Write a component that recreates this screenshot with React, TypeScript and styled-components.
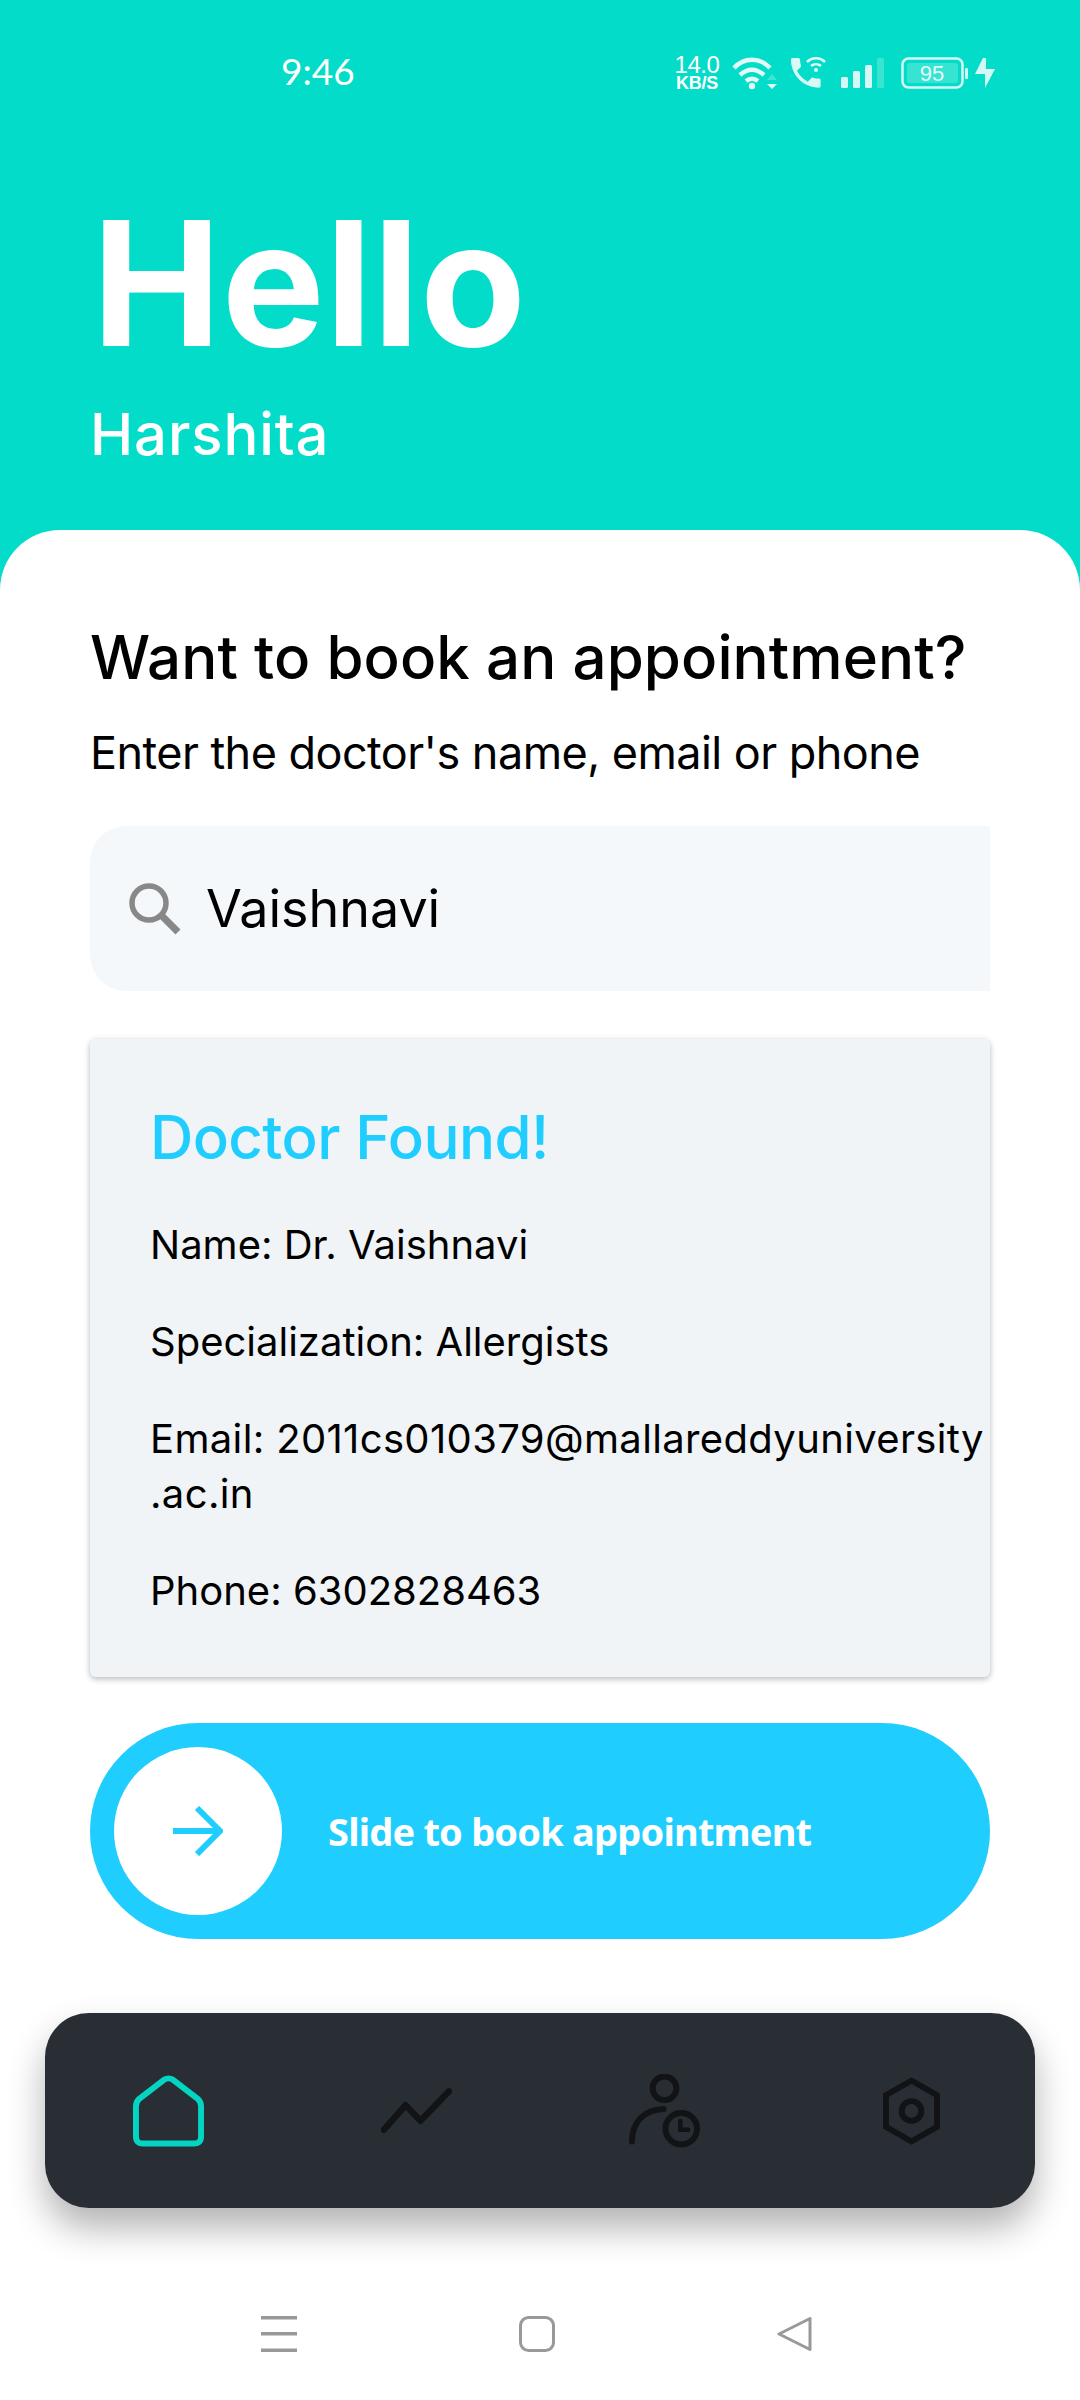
import React from "react";
import styled, { createGlobalStyle } from "styled-components";

const Global = createGlobalStyle`
  html, body { margin: 0; padding: 0; background: #fff; }
  * { box-sizing: border-box; }
`;
const Page = styled.div`
  width: 1080px; height: 2400px; background: #03dcc8; overflow: hidden;
  font-family: Inter, "Noto Sans", sans-serif; color: #000;
  display: flex; flex-direction: column;
`;
const Header = styled.header`
  height: 530px; flex: none; padding: 0; color: #fff; display: flex; flex-direction: column;
`;
const StatusBar = styled.div`
  height: 66px; margin-top: 40px; display: flex; align-items: center; padding-left: 281px; padding-right: 86px;
`;
const Time = styled.div`
  font-size: 37px; font-weight: 400; width: 393px; flex: none; font-family: Lato, sans-serif; line-height: 62px; margin-bottom: 4px;
`;
const Speed = styled.div`
  display: flex; flex-direction: column; align-items: center; width: 46px; line-height: 1; flex: none;
  font-family: "Liberation Sans", sans-serif; margin-right: 11px;
  b { font-size: 24px; font-weight: 400; line-height: 20px; letter-spacing: -.4px; }
  span { font-size: 18px; line-height: 16px; font-weight: 700; letter-spacing: -.2px; }
`;
const StatusIcons = styled.div`
  display: flex; align-items: center; flex: none;
`;
const Gap = styled.span<{ $w: number }>`
  display: inline-block; flex: none; width: ${(p) => p.$w}px;
`;
const Greeting = styled.h1`
  margin: 97px 0 0; padding-left: 92px; font-size: 173px; font-weight: 700; line-height: 160px; letter-spacing: .5px;
`;
const Name = styled.div`
  padding-left: 90px; font-size: 58px; line-height: 70px; font-weight: 500; margin-top: 36px; letter-spacing: .9px;
`;
const Sheet = styled.main`
  flex: 1; background: #fff; border-radius: 60px 60px 0 0; display: flex; flex-direction: column; padding: 0 90px;
`;
const Title = styled.h2`
  margin: 89px 0 0; font-size: 60px; line-height: 76px; font-weight: 500; letter-spacing: .1px; white-space: nowrap;
`;
const Subtitle = styled.p`
  margin: 28px 0 0; font-size: 45px; line-height: 60px; font-weight: 400; letter-spacing: -0.55px; white-space: nowrap;
`;
const Search = styled.div`
  margin-top: 43px; height: 165px; background: #f4f8fb; border-radius: 36px 0 0 36px;
  display: flex; align-items: center; padding-left: 38px; font-size: 52px; gap: 24px;
`;
const Card = styled.section`
  margin-top: 48px; height: 638px; background: #f0f4f7; border-radius: 6px; padding: 62px 0 0 60px;
  box-shadow: 0 2px 6px rgba(0,0,0,.28); overflow: hidden;
`;
const CardTitle = styled.h3`
  margin: 0 0 44px; font-size: 60px; line-height: 72px; font-weight: 500; color: #1fcdff; letter-spacing: -.6px;
`;
const Line = styled.p<{ $ls?: number }>`
  margin: 0 0 42px; font-size: 40px; line-height: 55px; white-space: nowrap; letter-spacing: ${(p) => p.$ls ?? 0}px;
`;
const Slider = styled.div`
  margin-top: 46px; height: 216px; border-radius: 108px; background: #1fcdff; display: flex; align-items: center;
  padding-left: 24px; gap: 46px;
`;
const Knob = styled.div`
  width: 168px; height: 168px; border-radius: 50%; background: #fff; display: flex; align-items: center; justify-content: center;
`;
const SlideText = styled.span`
  color: #fff; font-family: "Noto Sans", sans-serif; font-size: 38px; font-weight: 700; letter-spacing: -.8px;
`;
const Nav = styled.nav`
  margin: 74px -45px 0; height: 195px; background: #292d34; border-radius: 44px;
  box-shadow: 0 20px 36px rgba(0,0,0,.3);
  display: grid; grid-template-columns: 88px 71px 177px 71px 177px 73px 181px 57px; align-items: center;
`;
const Cell = styled.div<{ $col: number }>`
  grid-column: ${(p) => p.$col}; display: flex; align-items: center; justify-content: center;
`;
const SystemBar = styled.div`
  margin: 108px -90px 0; display: grid; grid-template-columns: 261px 36px 222px 36px 222px 36px; height: 36px; align-items: center;
`;
const SysSlot = styled.div<{ $col: number }>`
  grid-column: ${(p) => p.$col}; display: flex;
`;

export default function App() {
  return (
    <Page>
      <Global />
      <Header>
        <StatusBar>
          <Time>9:46</Time>
          <Speed><b>14.0</b><span>KB/S</span></Speed>
          <StatusIcons>
            <svg width="46" height="34" viewBox="0 0 46 34" fill="none" stroke="#e4faf8" strokeWidth="4.5">
              <path d="M3 12C13 1 29 1 39 12M9 19c8-7 16-7 24 0M15 25c4-3 8-3 12 0" />
              <circle cx="21" cy="30" r="3.2" fill="#e4faf8" stroke="none" />
              <path d="M36 24l5-6 5 6z" fill="#3ee5d5" stroke="none" />
              <path d="M36 28h10l-5 5z" fill="#e4faf8" stroke="none" />
            </svg>
            <Gap $w={14} />
            <svg width="36" height="34" viewBox="0 0 36 34" fill="none">
              <g transform="translate(-5 -3) scale(1.65)">
                <path d="M6.62 10.79c1.44 2.83 3.76 5.14 6.59 6.59l2.2-2.2c.27-.27.67-.36 1.02-.24 1.12.37 2.33.57 3.57.57.55 0 1 .45 1 1V20c0 .55-.45 1-1 1-9.39 0-17-7.61-17-17 0-.55.45-1 1-1h3.5c.55 0 1 .45 1 1 0 1.25.2 2.45.57 3.57.11.35.03.74-.25 1.02l-2.2 2.2z" fill="#d8f9f5" />
              </g>
              <path d="M16 6c5-5 13-5 18 0M20 10c3-2.500 7-2.500 10 0" stroke="#e4faf8" strokeWidth="2.500" />
              <circle cx="25" cy="14" r="2" fill="#e4faf8" />
            </svg>
            <Gap $w={14} />
            <svg width="44" height="30" viewBox="0 0 44 30">
              <rect x="0" y="19" width="7" height="11" rx="1.5" fill="#d4f8f4" />
              <rect x="12" y="13" width="7" height="17" rx="1.5" fill="#d4f8f4" />
              <rect x="24" y="7" width="7" height="23" rx="1.5" fill="#d4f8f4" />
              <rect x="36" y="0" width="7" height="30" rx="1.5" fill="#39e4d3" />
            </svg>
            <Gap $w={16} />
            <svg width="68" height="32" viewBox="0 0 68 32">
              <rect x="1.5" y="1.5" width="60" height="29" rx="6" fill="none" stroke="#d4f8f4" strokeWidth="2.5" />
              <rect x="6" y="6" width="51" height="20" rx="3" fill="#37e3d3" />
              <rect x="64" y="11" width="3" height="11" rx="1" fill="#d4f8f4" />
              <text x="31" y="24" fontSize="22" fill="#e4faf8" textAnchor="middle" fontFamily="Liberation Sans, sans-serif">95</text>
            </svg>
            <Gap $w={6} />
            <svg width="20" height="30" viewBox="0 0 20 30">
              <path d="M8 0h3v11h9L10 30v-14H0z" fill="#d4f8f4" />
            </svg>
          </StatusIcons>
        </StatusBar>
        <Greeting>Hello</Greeting>
        <Name>Harshita</Name>
      </Header>
      <Sheet>
        <Title>Want to book an appointment?</Title>
        <Subtitle>Enter the doctor's name, email or phone</Subtitle>
        <Search>
          <svg width="54" height="54" viewBox="0 0 54 54" fill="none" stroke="#888" strokeWidth="5.5">
            <circle cx="21" cy="21" r="17" />
            <path d="M33 33l17 17" strokeWidth="7" />
          </svg>
          Vaishnavi
        </Search>
        <Card>
          <CardTitle>Doctor Found!</CardTitle>
          <Line>Name: Dr. Vaishnavi</Line>
          <Line>Specialization: Allergists</Line>
          <Line $ls={0.35}>Email: 2011cs010379@mallareddyuniversity<br />.ac.in</Line>
          <Line>Phone: 6302828463</Line>
        </Card>
        <Slider>
          <Knob>
            <svg width="50" height="50" viewBox="0 0 50 50" fill="none" stroke="#1fcdff" strokeWidth="6">
              <path d="M0 25H46" />
              <path d="M24 2l23 23-23 23" />
            </svg>
          </Knob>
          <SlideText>Slide to book appointment</SlideText>
        </Slider>
        <Nav>
          <Cell $col={2}>
            <svg width="72" height="72" viewBox="0 0 72 72" fill="none" stroke="#03d5c2" strokeWidth="6" strokeLinejoin="round">
              <path d="M3 31c0-3 1-5 3-7L32 4c2-1.500 6-1.500 8 0l26 20c2 2 3 4 3 7v31c0 5-3 7-7 7H10c-4 0-7-2-7-7z" />
            </svg>
          </Cell>
          <Cell $col={4}>
            <svg width="72" height="46" viewBox="0 0 72 46" fill="none" stroke="#111315" strokeWidth="6.5" strokeLinecap="round" strokeLinejoin="round">
              <path d="M3 42L25 17l15 16L69 3" />
            </svg>
          </Cell>
          <Cell $col={6}>
            <svg width="74" height="74" viewBox="0 0 74 74" fill="none" stroke="#111315" strokeWidth="6" strokeLinecap="round">
              <circle cx="36" cy="14" r="12" />
              <path d="M3 68c0-20 12-32 32-33" />
              <circle cx="53" cy="55" r="16" />
              <path d="M52 47v9h8" strokeWidth="4.500" />
            </svg>
          </Cell>
          <Cell $col={8}>
            <svg width="58" height="68" viewBox="0 0 58 68" fill="none" stroke="#111315" strokeWidth="6">
              <path d="M29 3l26 15v32L29 65 3 50V18z" />
              <circle cx="29" cy="34" r="10" />
            </svg>
          </Cell>
        </Nav>
        <SystemBar>
          <SysSlot $col={2}>
            <svg width="36" height="36" viewBox="0 0 36 36" fill="#999">
              <rect y="0" width="36" height="3.500" /><rect y="16" width="36" height="3.500" /><rect y="32.500" width="36" height="3.500" />
            </svg>
          </SysSlot>
          <SysSlot $col={4}>
            <svg width="36" height="36" viewBox="0 0 36 36" fill="none" stroke="#999" strokeWidth="3">
              <rect x="1.500" y="1.500" width="33" height="33" rx="8" />
            </svg>
          </SysSlot>
          <SysSlot $col={6}>
            <svg width="36" height="36" viewBox="0 0 36 36" fill="none" stroke="#999" strokeWidth="3" strokeLinejoin="round">
              <path d="M33 2.500v31L2 18z" />
            </svg>
          </SysSlot>
        </SystemBar>
      </Sheet>
    </Page>
  );
}
